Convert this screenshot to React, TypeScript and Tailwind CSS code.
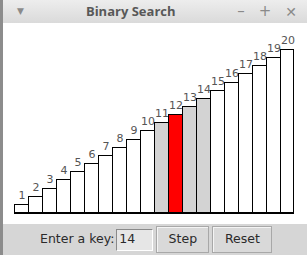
import React from 'react';

const values = Array.from({ length: 20 }, (_, i) => i + 1);
const probed = [11, 13, 14];
const current = 12;

const barColor = (v: number) => {
  if (v === current) return 'bg-[#ff0000]';
  if (probed.includes(v)) return 'bg-[#d3d3d3]';
  return 'bg-white';
};

const App: React.FC = () => {
  return (
    <div className="w-[307px] h-[255px] flex flex-col bg-[#d6d6d6] border-l-[3px] border-[#8c8c8c] overflow-hidden font-['DejaVu_Sans',sans-serif]">
      {/* Title bar */}
      <div className="h-[23px] shrink-0 flex items-center bg-gradient-to-b from-[#ededed] to-[#dadada] text-[#8a8a8a]">
        <span className="ml-[14px] text-[9px] leading-none">▼</span>
        <span className="ml-[62px] text-[13px] font-bold text-[#585858] font-['Open_Sans',sans-serif]">Binary Search</span>
        <div className="ml-auto mr-[10px] flex items-center gap-[14px] text-[15px] leading-none">
          <span>–</span>
          <span>+</span>
          <span className="text-[14px]">✕</span>
        </div>
      </div>

      {/* Chart */}
      <div className="h-[201px] shrink-0 bg-white flex items-end pl-[11px] pb-[10px]">
        <div className="flex items-end border-b-2 border-black">
          {values.map((v) => (
            <div key={v} className="flex flex-col items-center w-[14px]">
              <span className="text-[11px] leading-none text-[#555] mb-[3px] pl-[2px] whitespace-nowrap">{v}</span>
              <div
                className={`w-[14px] border-l-[1.5px] border-t-[1.5px] border-black ${v === 20 ? 'border-r-[1.5px]' : ''} ${barColor(v)}`}
                style={{ height: Math.round(v * 8.15) }}
              />
            </div>
          ))}
        </div>
      </div>

      {/* Controls */}
      <div className="flex-1 flex items-center pl-[37px] text-[12.5px] text-[#2a2a2a]">
        <span>Enter a key:</span>
        <div className="ml-[2px] w-[37px] h-[22px] bg-[#e6e6e6] border border-t-[#8a8a8a] border-l-[#8a8a8a] border-b-white border-r-white flex items-center pl-[2px]">
          14
        </div>
        <button className="ml-[3px] w-[53px] h-[27px] bg-[#d9d9d9] border border-[#a8a8a8] shadow-[inset_1px_1px_0_#f4f4f4]">
          Step
        </button>
        <button className="ml-[3px] w-[60px] h-[27px] bg-[#d9d9d9] border border-[#a8a8a8] shadow-[inset_1px_1px_0_#f4f4f4]">
          Reset
        </button>
      </div>
    </div>
  );
};

export default App;
